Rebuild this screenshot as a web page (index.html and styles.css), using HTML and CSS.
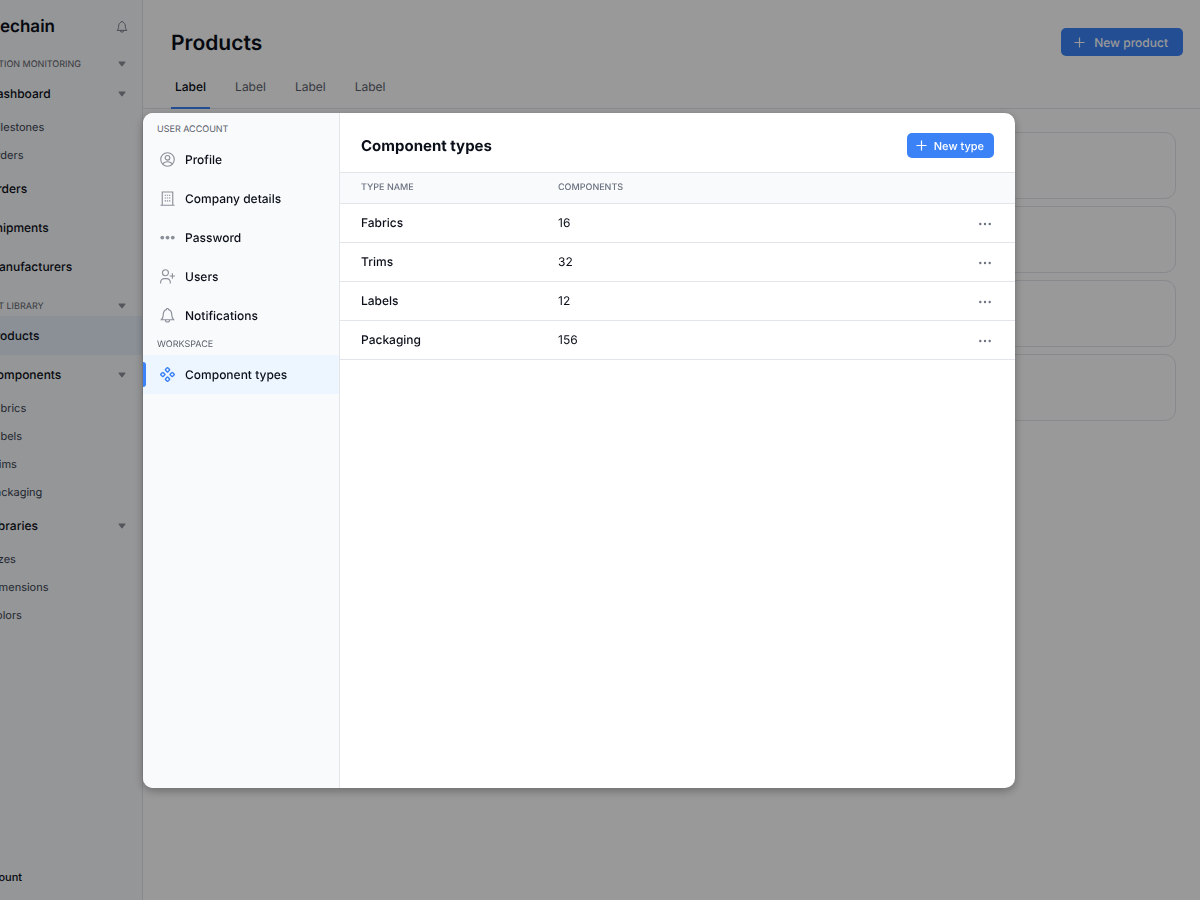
FILE: index.html
```
<!DOCTYPE html>
<html lang="en">
<head>
  <meta charset="UTF-8">
  <meta name="viewport" content="width=device-width, initial-scale=1.0">
  <title>Component types</title>
  <link rel="stylesheet" href="styles.css">
</head>
<body>
  <!-- shared icons -->
  <svg class="sprite" aria-hidden="true">
    <symbol id="bell" viewBox="0 0 16 16">
      <path d="M1.500 12.500h13c-1.200-1.300-2-2.400-2-5.500 0-3-1.700-4.800-3.300-5.300a1.200 1.200 0 0 0-2.400 0C5.200 2.200 3.500 4 3.500 7c0 3.100-.8 4.200-2 5.500z"/>
      <path d="M5.800 12.700a2.200 2.200 0 0 0 4.400 0"/>
    </symbol>
    <symbol id="plus" viewBox="0 0 12 12">
      <path d="M6 .5v11M.5 6h11"/>
    </symbol>
    <symbol id="caret" viewBox="0 0 8 6">
      <path d="M1.200.5h5.600c.6 0 .8.5.5.9L4.600 5.100c-.3.4-.9.4-1.200 0L.7 1.400C.4 1 .6.5 1.200.5z"/>
    </symbol>
    <symbol id="dots" viewBox="0 0 14 4">
      <circle cx="2.300" cy="2" r="1.200"/>
      <circle cx="7" cy="2" r="1.200"/>
      <circle cx="11.700" cy="2" r="1.200"/>
    </symbol>
  </svg>

  <div class="app">
    <aside class="sidebar">
      <div class="sidebar-head">
        <span class="logo">echain</span>
        <svg class="icon-bell"><use href="#bell"/></svg>
      </div>
      <nav class="menu">
        <h2 class="menu-title">Production monitoring <svg class="caret"><use href="#caret"/></svg></h2>
        <a class="menu-item" href="#">Dashboard <svg class="caret"><use href="#caret"/></svg></a>
        <a class="menu-sub" href="#">Milestones</a>
        <a class="menu-sub" href="#">Orders</a>
        <a class="menu-item" href="#">Orders</a>
        <a class="menu-item" href="#">Shipments</a>
        <a class="menu-item" href="#">Manufacturers</a>
      </nav>
      <nav class="menu">
        <h2 class="menu-title">Product library <svg class="caret"><use href="#caret"/></svg></h2>
        <a class="menu-item active" href="#">Products</a>
        <a class="menu-item" href="#">Components <svg class="caret"><use href="#caret"/></svg></a>
        <a class="menu-sub" href="#">Fabrics</a>
        <a class="menu-sub" href="#">Labels</a>
        <a class="menu-sub" href="#">Trims</a>
        <a class="menu-sub" href="#">Packaging</a>
        <a class="menu-item" href="#">Libraries <svg class="caret"><use href="#caret"/></svg></a>
        <a class="menu-sub" href="#">Sizes</a>
        <a class="menu-sub" href="#">Dimensions</a>
        <a class="menu-sub" href="#">Colors</a>
      </nav>
      <a class="account" href="#">Account</a>
    </aside>

    <main class="page">
      <header class="page-header">
        <div class="page-top">
          <h1>Products</h1>
          <button class="btn btn-large" type="button"><svg><use href="#plus"/></svg>New product</button>
        </div>
        <nav class="tabs">
          <a class="tab active" href="#">Label</a>
          <a class="tab" href="#">Label</a>
          <a class="tab" href="#">Label</a>
          <a class="tab" href="#">Label</a>
        </nav>
      </header>
      <div class="cards">
        <div class="card"></div>
        <div class="card"></div>
        <div class="card"></div>
        <div class="card"></div>
      </div>
    </main>
  </div>

  <div class="overlay">
    <div class="modal" role="dialog" aria-labelledby="modal-title">
      <nav class="settings">
        <h3 class="menu-title">User account</h3>
        <a class="settings-item" href="#">
          <svg viewBox="0 0 16 16">
            <circle cx="8" cy="8" r="7.200"/>
            <circle cx="8" cy="6.200" r="2.500"/>
            <path d="M3 13c.8-1.800 2.700-2.600 5-2.600s4.200.8 5 2.600"/>
          </svg>
          Profile
        </a>
        <a class="settings-item" href="#">
          <svg viewBox="0 0 16 16">
            <path d="M.5 15.200h15M2.400 15V1h11.200v14"/>
            <path d="M5 4.500h1.400M7.300 4.500h1.400M9.600 4.500h1.400M5 7.500h1.400M7.300 7.500h1.400M9.600 7.500h1.400M5 10.500h1.400M7.300 10.500h1.400M9.600 10.500h1.400"/>
          </svg>
          Company details
        </a>
        <a class="settings-item" href="#">
          <svg class="filled" viewBox="0 0 16 16">
            <circle cx="2.400" cy="8" r="2"/>
            <circle cx="8" cy="8" r="2"/>
            <circle cx="13.600" cy="8" r="2"/>
          </svg>
          Password
        </a>
        <a class="settings-item" href="#">
          <svg viewBox="0 0 16 16">
            <circle cx="5.800" cy="4" r="3.200"/>
            <path d="M.7 15.500v-1.500a3.800 3.800 0 0 1 3.800-3.800h2.700a3.800 3.800 0 0 1 3.800 3.800v1.500M13.200 4.600v5.800M10.300 7.500h5.700"/>
          </svg>
          Users
        </a>
        <a class="settings-item" href="#">
          <svg><use href="#bell"/></svg>
          Notifications
        </a>
        <h3 class="menu-title">Workspace</h3>
        <a class="settings-item active" href="#">
          <svg viewBox="0 0 16 16">
            <rect x="6.200" y="1.200" width="3.600" height="3.600" rx=".8" transform="rotate(45 8 3)"/>
            <rect x="1.200" y="6.200" width="3.600" height="3.600" rx=".8" transform="rotate(45 3 8)"/>
            <rect x="11.200" y="6.200" width="3.600" height="3.600" rx=".8" transform="rotate(45 13 8)"/>
            <rect x="6.200" y="11.200" width="3.600" height="3.600" rx=".8" transform="rotate(45 8 13)"/>
          </svg>
          Component types
        </a>
      </nav>

      <section class="content">
        <header class="content-header">
          <h2 id="modal-title">Component types</h2>
          <button class="btn" type="button"><svg><use href="#plus"/></svg>New type</button>
        </header>
        <table class="types">
          <thead>
            <tr><th class="col-name">Type name</th><th>Components</th><th></th></tr>
          </thead>
          <tbody>
            <tr>
              <td>Fabrics</td><td class="count">16</td>
              <td class="actions"><button type="button" aria-label="More"><svg><use href="#dots"/></svg></button></td>
            </tr>
            <tr>
              <td>Trims</td><td class="count">32</td>
              <td class="actions"><button type="button" aria-label="More"><svg><use href="#dots"/></svg></button></td>
            </tr>
            <tr>
              <td>Labels</td><td class="count">12</td>
              <td class="actions"><button type="button" aria-label="More"><svg><use href="#dots"/></svg></button></td>
            </tr>
            <tr>
              <td>Packaging</td><td class="count">156</td>
              <td class="actions"><button type="button" aria-label="More"><svg><use href="#dots"/></svg></button></td>
            </tr>
          </tbody>
        </table>
      </section>
    </div>
  </div>
</body>
</html>
```
FILE: styles.css
```
* {
  margin: 0;
  padding: 0;
  box-sizing: border-box;
}

body {
  font-family: Inter, "Liberation Sans", sans-serif;
  font-size: 12px;
  text-rendering: geometricPrecision;
  color: #0b0f19;
  background-color: #fff;
  overflow: hidden;
}

a {
  color: inherit;
  text-decoration: none;
}

button {
  font-family: inherit;
  text-rendering: inherit;
  border: none;
  cursor: pointer;
}

.sprite {
  position: absolute;
  width: 0;
  height: 0;
}

/* the app runs past both sides of the window */
.app {
  display: flex;
  min-height: 100vh;
  margin: 0 -12px 0 -54px;
}

/* sidebar */
.sidebar {
  display: flex;
  flex-direction: column;
  flex: none;
  width: 197px;
  background-color: #f9fafc;
  border-right: 1px solid #e2e5ea;
}

.sidebar-head {
  display: flex;
  align-items: center;
  justify-content: space-between;
  height: 54px;
  padding: 0 14px 0 54px;
}

.logo {
  font-size: 17px;
  font-weight: 600;
}

.icon-bell {
  width: 12px;
  height: 12px;
  fill: none;
  stroke: #6b7280;
  stroke-width: 1.2;
}

.menu {
  margin-bottom: 10px;
}

.menu-title {
  display: flex;
  align-items: center;
  justify-content: space-between;
  height: 20px;
  padding: 0 16px 0 14px;
  font-size: 9px;
  font-weight: 400;
  text-transform: uppercase;
  color: #5b616b;
}

.menu-item {
  display: flex;
  align-items: center;
  justify-content: space-between;
  height: 39px;
  padding: 0 16px 0 42px;
  font-weight: 500;
}

.menu-item.active {
  background-color: #e8f1fc;
}

.menu-sub {
  display: flex;
  align-items: center;
  height: 28px;
  padding-left: 42px;
  font-size: 11px;
  font-weight: 400;
  color: #374151;
}

.caret {
  width: 8px;
  height: 6px;
  fill: #8a8f98;
}

.account {
  margin-top: auto;
  padding: 0 0 16px 32px;
  font-size: 11px;
  line-height: 14px;
  font-weight: 500;
}

/* page */
.page {
  flex: 1;
}

.page-header {
  border-bottom: 1px solid #e2e5ea;
}

.page-top {
  display: flex;
  align-items: flex-start;
  justify-content: space-between;
  padding: 28px 29px 4px 28px;
}

.page-top h1 {
  font-size: 21px;
  line-height: 32px;
  font-weight: 600;
}

.tabs {
  display: flex;
  gap: 21px;
  padding-left: 28px;
}

.tab {
  padding: 3px 4px 0;
  line-height: 40px;
  font-weight: 400;
  color: #5b616b;
  border-bottom: 2px solid transparent;
  margin-bottom: -1px;
}

.tab.active {
  font-weight: 500;
  color: #0b0f19;
  border-bottom-color: #3b82f6;
}

.cards {
  display: flex;
  flex-direction: column;
  gap: 7px;
  padding: 23px 36px 23px 28px;
}

.card {
  height: 67px;
  border: 1px solid #e2e5ea;
  border-radius: 11px;
}

.btn {
  display: flex;
  align-items: center;
  gap: 7px;
  height: 25px;
  padding: 0 10px 0 9px;
  border-radius: 5px;
  font-size: 11px;
  font-weight: 500;
  color: #fff;
  background-color: #3b82f6;
}

.btn svg {
  width: 11px;
  height: 11px;
  stroke: #fff;
  stroke-width: 1.3;
}

.btn-large {
  height: 28px;
  gap: 9px;
  padding: 0 15px 0 13px;
  font-size: 12px;
}

/* modal */
.overlay {
  position: fixed;
  top: 0;
  bottom: 0;
  left: -54px;
  right: -12px;
  display: flex;
  align-items: center;
  justify-content: center;
  background-color: rgba(0, 0, 0, 0.4);
}

.modal {
  display: flex;
  width: 80%;
  max-width: 872px;
  height: 75vh;
  border-radius: 10px;
  overflow: hidden;
  background-color: #fff;
  box-shadow: 0 3px 10px rgba(0, 0, 0, 0.3);
}

.settings {
  flex: none;
  width: 197px;
  padding-top: 7px;
  background-color: #f9fafc;
  border-right: 1px solid #e2e5ea;
}

.settings-item {
  display: flex;
  align-items: center;
  gap: 10px;
  height: 39px;
  padding-left: 17px;
  font-weight: 500;
}

.settings-item svg {
  width: 15px;
  height: 15px;
  fill: none;
  stroke: #8a8f98;
  stroke-width: 1.2;
}

.settings-item svg.filled {
  fill: #8a8f98;
  stroke: none;
}

.settings-item.active {
  position: relative;
  background-color: #edf6ff;
}

.settings-item.active svg {
  stroke: #3b82f6;
  stroke-width: 1.5;
}

.settings-item.active::before {
  content: "";
  position: absolute;
  left: 0;
  top: 7px;
  bottom: 7px;
  width: 3px;
  border-radius: 0 3px 3px 0;
  background-color: #3b82f6;
}

.content {
  flex: 1;
}

.content-header {
  display: flex;
  align-items: center;
  justify-content: space-between;
  height: 59px;
  padding: 7px 21px 0;
}

.content-header h2 {
  font-size: 15px;
  font-weight: 700;
}

.types {
  width: 100%;
  border-collapse: collapse;
}

.types th {
  height: 31px;
  border-top: 1px solid #e2e5ea;
  border-bottom: 1px solid #e2e5ea;
  background-color: #f9fafc;
  font-size: 9px;
  font-weight: 500;
  text-align: left;
  text-transform: uppercase;
  color: #6b7280;
}

.types th.col-name {
  width: 218px;
}

.types th:first-child,
.types td:first-child {
  padding-left: 21px;
}

.types td {
  height: 39px;
  border-bottom: 1px solid #e2e5ea;
  font-weight: 500;
}

.types td.count {
  font-weight: 400;
}

.types td.actions {
  padding-right: 23px;
  text-align: right;
}

.actions button {
  background: none;
  vertical-align: middle;
}

.actions svg {
  display: block;
  width: 14px;
  height: 4px;
  fill: #6b7280;
}
```
